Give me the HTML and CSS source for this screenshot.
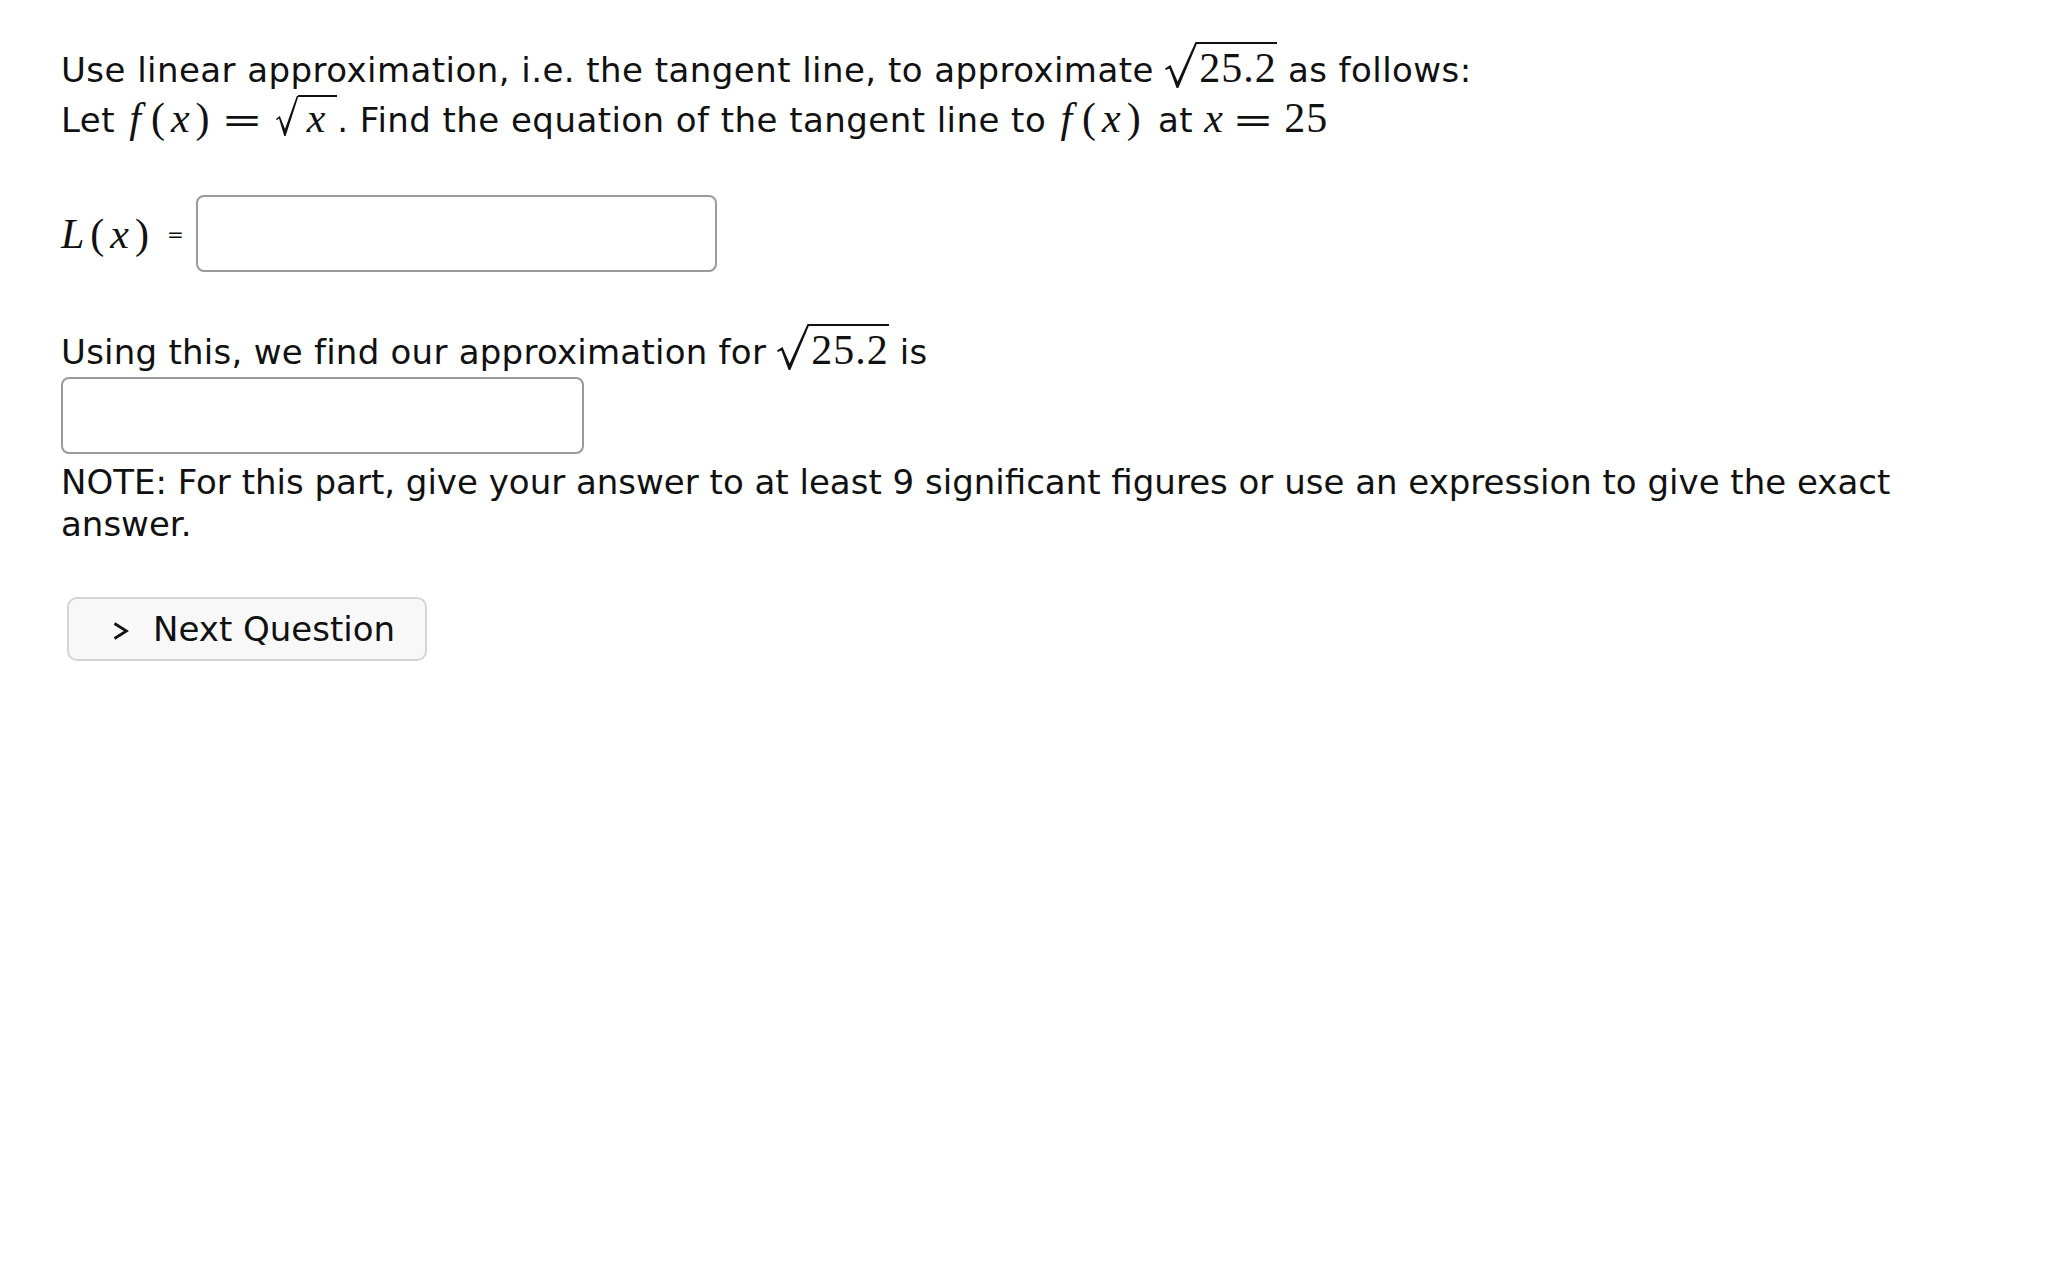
FILE: index.html
```html
<!DOCTYPE html>
<html lang="en">
<head>
<meta charset="utf-8">
<title>Linear approximation</title>
<link rel="stylesheet" href="styles.css">
</head>
<body>
<div class="page">
  <p class="prompt">Use linear approximation, i.e. the tangent line, to approximate <span class="sqrt big"><svg class="rad" width="32" height="46" viewBox="0 0 32 46"><polygon points="0,26.5 5.5,23 12.6,39.5 30.5,0 32,0 32,1.6 13.3,46 11.6,46 4.4,26.4 0.8,28"/></svg><span class="radicand"><span class="num">25.2</span></span></span> as follows:<br>Let <span class="math"><i class="mi f">f</i><span class="mp">(</span><i class="mi">x</i><span class="mp">)</span></span><span class="rel first">=</span><span class="sqrt small"><svg class="rad" width="22" height="40" viewBox="0 0 22 40"><polygon points="0,23 3.8,20 9,33 20.8,0 22,0 22,1.6 9.6,40 8.2,40 3,22.6 0.6,24.2"/></svg><span class="radicand pad"><i class="mi">x</i></span></span>. Find the equation of the tangent line to <span class="math"><i class="mi f">f</i><span class="mp">(</span><i class="mi">x</i><span class="mp">)</span></span> at <span class="math"><i class="mi">x</i></span><span class="rel second">=</span><span class="math"><span class="num">25</span></span></p>

  <div class="answer-row">
    <span class="math"><i class="mi">L</i><span class="mp">(</span><i class="mi">x</i><span class="mp">)</span></span>
    <span class="eq">=</span>
    <input class="ans wide" type="text" aria-label="L(x)">
  </div>

  <p class="prompt using">Using this, we find our approximation for <span class="sqrt big"><svg class="rad" width="32" height="46" viewBox="0 0 32 46"><polygon points="0,26.5 5.5,23 12.6,39.5 30.5,0 32,0 32,1.6 13.3,46 11.6,46 4.4,26.4 0.8,28"/></svg><span class="radicand"><span class="num">25.2</span></span></span> is</p>
  <input class="ans block" type="text" aria-label="approximation">

  <p class="note">NOTE: For this part, give your answer to at least 9 significant figures or use an expression to give the exact answer.</p>

  <button class="next" type="button"><svg class="chev" width="17" height="20" viewBox="0 0 17 20"><polyline points="2.5,2.5 14.5,10 2.5,17.5"/></svg><span>Next Question</span></button>
</div>
</body>
</html>
```

FILE: styles.css
```css
html, body {
  margin: 0;
  padding: 0;
  background: #ffffff;
}

body {
  font-family: "DejaVu Sans", Verdana, sans-serif;
  font-size: 34px;
  color: #111111;
}

.page {
  padding: 45px 61px 0 61px;
}

.prompt {
  margin: 0;
  line-height: 50px;
  letter-spacing: 0.45px;
}

.math {
  font-family: "Liberation Serif", "Times New Roman", serif;
  font-size: 42px;
  line-height: 42px;
  letter-spacing: 0;
}

.mi {
  font-style: italic;
  font-family: "Liberation Serif", "Times New Roman", serif;
}

.mi.f {
  padding-left: 3px;
  padding-right: 4px;
}

.mp {
  padding: 0 6px;
}

.num {
  font-family: "Liberation Serif", "Times New Roman", serif;
  font-style: normal;
  letter-spacing: 1px;
}

.rel {
  display: inline-block;
  font-family: "DejaVu Serif", serif;
  font-size: 36px;
  line-height: 36px;
  letter-spacing: 0;
  transform: scaleX(1.38);
}

.rel.first {
  margin: 0 19px 0 11px;
}

.rel.second {
  margin: 0 16px 0 15px;
}

.sqrt {
  white-space: nowrap;
  letter-spacing: 0;
}

.rad {
  fill: #111111;
}

.sqrt.big .rad {
  vertical-align: -6px;
  margin-top: -4px;
}

.sqrt.small .rad {
  vertical-align: -4px;
}

.radicand {
  display: inline-block;
  border-top: 2px solid #111111;
  font-family: "Liberation Serif", "Times New Roman", serif;
  font-size: 42px;
  line-height: 42px;
}

.sqrt.big .radicand {
  padding-top: 3px;
  margin-top: -4px;
  padding-left: 2px;
}

.radicand.pad {
  padding-left: 9px;
  padding-right: 12px;
}

.answer-row {
  display: flex;
  align-items: center;
  margin-top: 50px;
}

.eq {
  font-size: 20px;
  margin-left: 12px;
}

.ans {
  box-sizing: border-box;
  height: 77px;
  border: 2px solid #9a9a9a;
  border-radius: 8px;
  background: #ffffff;
  font-family: "DejaVu Sans", sans-serif;
  font-size: 30px;
  padding: 0 12px;
  margin: 0;
}

.ans.wide {
  width: 521px;
  margin-left: 12px;
}

.ans.block {
  display: block;
  width: 523px;
}

.using {
  margin-top: 55px;
  letter-spacing: 0.25px;
}

.note {
  margin: 7px 0 0 0;
  line-height: 42px;
}

.next {
  display: inline-flex;
  align-items: center;
  gap: 24px;
  box-sizing: border-box;
  height: 64px;
  margin: 52px 0 0 6px;
  padding: 0 30px 0 43px;
  border: 2px solid #d4d4d4;
  border-radius: 10px;
  background: #f8f8f8;
  font-family: "DejaVu Sans", Verdana, sans-serif;
  font-size: 34px;
  color: #111111;
}

.chev {
  fill: none;
  stroke: #111111;
  stroke-width: 2.8;
  margin-top: 3px;
}
```
